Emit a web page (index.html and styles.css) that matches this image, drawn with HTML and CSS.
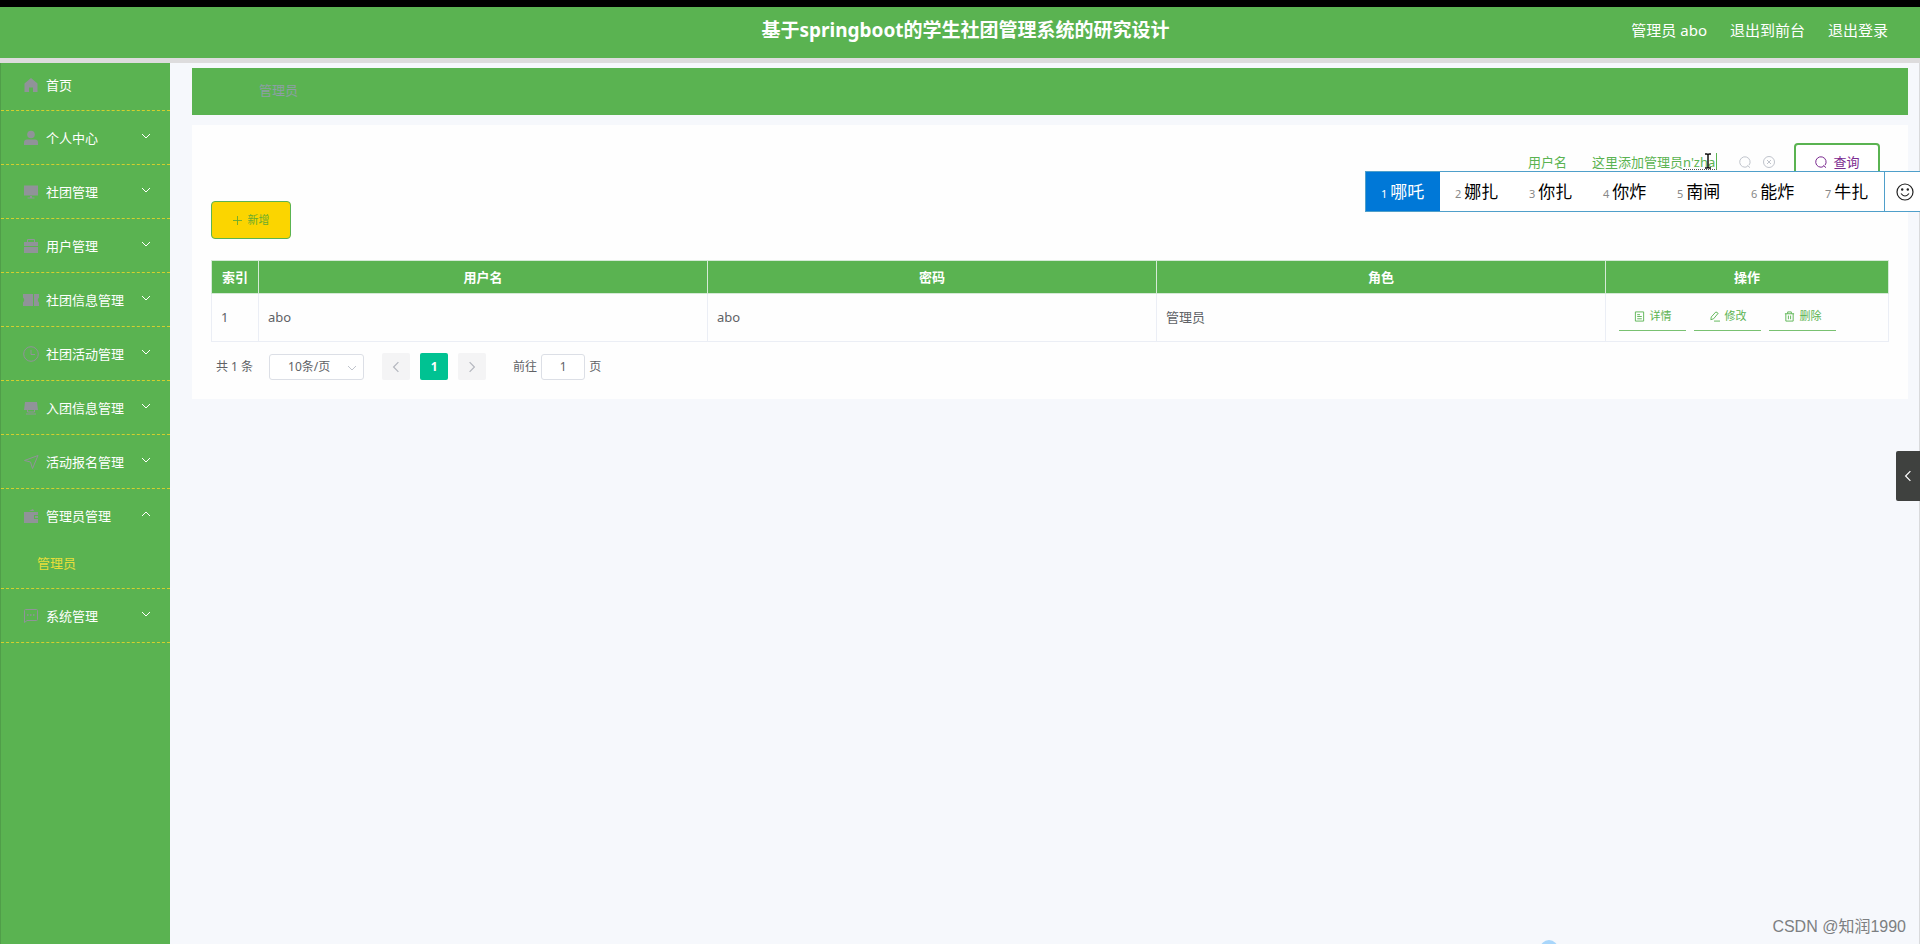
FILE: index.html
```html
<!DOCTYPE html>
<html lang="zh-CN">
<head>
<meta charset="utf-8">
<title>基于springboot的学生社团管理系统的研究设计</title>
<link rel="stylesheet" href="styles.css">
</head>
<body>
<svg class="defs" aria-hidden="true">
  <symbol id="chevron" viewBox="0 0 10 10"><path d="M1 3l4 4 4-4" fill="none" stroke="currentColor" stroke-width="1"/></symbol>
  <symbol id="search" viewBox="0 0 14 14"><path d="M9.500 11.500A5.200 5.200 0 1 1 11 10.200M9.300 10.300l2.700 2.400" fill="none" stroke="currentColor" stroke-width="1"/></symbol>
</svg>
<header class="topbar">
  <h1 class="title">基于springboot的学生社团管理系统的研究设计</h1>
  <nav class="user-nav">
    <span>管理员 abo</span>
    <a href="#">退出到前台</a>
    <a href="#">退出登录</a>
  </nav>
</header>
<div class="shell">
  <nav class="sidebar">
    <ul class="menu">
      <li class="group home"><button class="entry"><svg class="icon" viewBox="0 0 16 16"><path d="M8 1l6.500 5.500V15H10v-4.500H6V15H1.500V6.500z" fill="currentColor"/></svg><span>首页</span></button></li>
      <li class="group"><button class="entry"><svg class="icon" viewBox="0 0 16 16"><circle cx="8" cy="4.500" r="3.800" fill="currentColor"/><path d="M1 15v-2.500Q1 9.500 4 9.500h8q3 0 3 3V15z" fill="currentColor"/></svg><span>个人中心</span><svg class="arrow"><use href="#chevron"/></svg></button></li>
      <li class="group"><button class="entry"><svg class="icon" viewBox="0 0 16 16"><path d="M1 1.500h14v10H1zM7 12h2v1.500h2.500v1h-7v-1H7z" fill="currentColor"/></svg><span>社团管理</span><svg class="arrow"><use href="#chevron"/></svg></button></li>
      <li class="group"><button class="entry"><svg class="icon" viewBox="0 0 16 16"><path d="M1 4h14v4H1zM1 9h14v6H1z" fill="currentColor"/><path d="M4.500 4V1.500h7V4" fill="none" stroke="currentColor"/></svg><span>用户管理</span><svg class="arrow"><use href="#chevron"/></svg></button></li>
      <li class="group"><button class="entry"><svg class="icon" viewBox="0 0 16 16"><path d="M0 2h10v12H0v-3.500q2.500-2.500 0-5zM11 2h5v3.500q-2.500 2.500 0 5V14h-5z" fill="currentColor"/></svg><span>社团信息管理</span><svg class="arrow"><use href="#chevron"/></svg></button></li>
      <li class="group"><button class="entry"><svg class="icon" viewBox="0 0 16 16"><circle cx="8" cy="8" r="7.300" fill="none" stroke="currentColor"/><path d="M8 4v4.500h4" fill="none" stroke="currentColor"/></svg><span>社团活动管理</span><svg class="arrow"><use href="#chevron"/></svg></button></li>
      <li class="group"><button class="entry"><svg class="icon" viewBox="0 0 16 16"><path d="M2 2h12l1 8H1z" fill="currentColor"/><path d="M4.500 10v2h7v-2M3 14h10" fill="none" stroke="currentColor"/></svg><span>入团信息管理</span><svg class="arrow"><use href="#chevron"/></svg></button></li>
      <li class="group"><button class="entry"><svg class="icon" viewBox="0 0 16 16"><path d="M15 1.500L1.500 6.500l6 1.500 2 6.500z" fill="none" stroke="currentColor"/></svg><span>活动报名管理</span><svg class="arrow"><use href="#chevron"/></svg></button></li>
      <li class="group"><button class="entry"><svg class="icon" viewBox="0 0 16 16"><path d="M1 4h14v3h-4v4h4v4H1zM6 3l4-2 1 2zM12 8h3v2h-3z" fill="currentColor"/></svg><span>管理员管理</span><svg class="arrow up"><use href="#chevron"/></svg></button>
        <a class="sub" href="#">管理员</a></li>
      <li class="group"><button class="entry"><svg class="icon" viewBox="0 0 16 16"><path d="M1.500 2.500q0-1 1-1h11q1 0 1 1v9q0 1-1 1H4l-2.500 2z" fill="none" stroke="currentColor"/><path d="M4 7h1.500m1.500 0h1.500m1.500 0h1.500" stroke="currentColor" stroke-width="1.500"/></svg><span>系统管理</span><svg class="arrow"><use href="#chevron"/></svg></button></li>
    </ul>
  </nav>
  <main class="content">
    <div class="crumb">管理员</div>
    <section class="card">
      <form class="search">
        <label for="username">用户名</label>
        <div class="field">
          <input id="username" type="text" value="这里添加管理员n'zha">
          <span class="composing"></span>
          <svg class="ibeam" viewBox="0 0 8 16"><path d="M1 1h2l1 1 1-1h2M4 2v12M1 15h2l1-1 1 1h2" fill="none" stroke="#111" stroke-width="1.500"/></svg>
        </div>
        <svg class="field-icon"><use href="#search"/></svg>
        <svg class="field-icon" viewBox="0 0 14 14"><circle cx="7" cy="7" r="5.500" fill="none" stroke="currentColor"/><path d="M5 5l4 4M9 5l-4 4" stroke="currentColor"/></svg>
        <button class="query" type="button"><svg class="query-icon"><use href="#search"/></svg>查询</button>
      </form>
      <div class="ime">
        <span class="cand active"><small>1</small>哪吒</span>
        <span class="cand"><small>2</small>娜扎</span>
        <span class="cand"><small>3</small>你扎</span>
        <span class="cand"><small>4</small>你炸</span>
        <span class="cand"><small>5</small>南闸</span>
        <span class="cand"><small>6</small>能炸</span>
        <span class="cand"><small>7</small>牛扎</span>
        <span class="emoji"><svg class="smile" viewBox="0 0 18 18"><circle cx="9" cy="9" r="8" fill="none" stroke="#222" stroke-width="1.200"/><path d="M5 10.500q4 5 8 0" fill="none" stroke="#222" stroke-width="1.200"/><circle cx="6.200" cy="6.500" r="1.200" fill="#222"/><circle cx="11.800" cy="6.500" r="1.200" fill="#222"/></svg></span>
      </div>
      <button class="add" type="button"><svg class="plus" viewBox="0 0 10 10"><path d="M5 0v10M0 5h10" stroke="currentColor"/></svg>新增</button>
      <table class="grid">
        <colgroup><col class="col-index"><col><col><col><col class="col-ops"></colgroup>
        <thead><tr><th>索引</th><th>用户名</th><th>密码</th><th>角色</th><th>操作</th></tr></thead>
        <tbody><tr><td>1</td><td>abo</td><td>abo</td><td>管理员</td>
          <td><div class="ops">
            <button class="op" type="button"><svg class="op-icon" viewBox="0 0 12 12"><path d="M1.500 1h9v10h-9zM3.500 4h3M3.500 6h5M3.500 8.500h5" fill="none" stroke="currentColor"/></svg>详情</button>
            <button class="op" type="button"><svg class="op-icon" viewBox="0 0 12 12"><path d="M2 9.500l.5-3L7.500 1l2.500 1.500-5 6zM5.500 11H12" fill="none" stroke="currentColor"/></svg>修改</button>
            <button class="op" type="button"><svg class="op-icon" viewBox="0 0 12 12"><path d="M1 3h10M4 3V1h4v2M2 3v8h8V3M4.800 5v4M7.200 5v4" fill="none" stroke="currentColor"/></svg>删除</button>
          </div></td></tr></tbody>
      </table>
      <div class="pager">
        <span class="total">共 1 条</span>
        <span class="size"><select aria-label="每页条数"><option>10条/页</option></select><svg class="size-arrow"><use href="#chevron"/></svg></span>
        <button class="page" type="button" aria-label="上一页"><svg class="page-arrow prev"><use href="#chevron"/></svg></button>
        <button class="page current" type="button">1</button>
        <button class="page" type="button" aria-label="下一页"><svg class="page-arrow next"><use href="#chevron"/></svg></button>
        <label class="jump">前往<input type="text" value="1">页</label>
      </div>
    </section>
  </main>
</div>
<button class="drawer" aria-label="展开"><svg class="drawer-arrow"><use href="#chevron"/></svg></button>
<span class="bubble"></span>
<span class="watermark">CSDN @知润1990</span>
</body>
</html>
```

FILE: styles.css
```css
* { box-sizing: border-box; }
html { height: 100%; }
body {
  margin: 0;
  min-height: 100%;
  display: flex;
  flex-direction: column;
  position: relative;
  overflow: hidden;
  border-top: 7px solid #000;
  background: #f6f8fc;
  color: #606266;
  font: 13px/20px "Noto Sans", "Noto Sans CJK SC", sans-serif;
}
button, input, select { font: inherit; color: inherit; margin: 0; }
button { cursor: pointer; }
a { text-decoration: none; color: inherit; }
.defs { position: absolute; width: 0; height: 0; }

.topbar {
  display: grid;
  grid-template-columns: 1fr auto 1fr;
  align-items: center;
  height: 56px;
  padding: 0 32px 6px 43px;
  background: #5ab351;
  border-bottom: 5px solid #dddcdd;
  color: #fff;
}
.title { grid-column: 2; margin: 0; font-size: 19px; line-height: 28px; font-weight: 700; }
.user-nav { display: flex; justify-content: flex-end; gap: 23px; font-size: 15px; }

.shell { display: flex; flex: 1; border-right: 1px solid #d9dadc; }
.sidebar { width: 170px; flex: none; background: #5ab351; border-left: 1px solid #509e49; }
.menu { list-style: none; margin: 0; padding: 0; }
.group { border-bottom: 1px dashed #d3cf2d; }
.entry {
  display: flex;
  align-items: center;
  width: 100%;
  height: 53px;
  padding: 1px 19px 0 22px;
  border: 0;
  background: none;
  color: #fff;
  text-align: left;
}
.home .entry { height: 47px; padding-top: 0; padding-bottom: 4px; }
.icon { width: 16px; height: 16px; margin-right: 7px; color: #909399; }
.arrow { width: 10px; height: 10px; margin-left: auto; margin-bottom: 4px; }
.up { transform: rotate(180deg); }
.sub { display: block; padding: 11px 36px 15px; color: #e8de3a; }

.content { flex: 1; min-width: 0; padding: 5px 11px 0 22px; }
.crumb { height: 47px; padding: 12px 67px; background: #5ab351; color: #8d9fa5; }
.card { position: relative; margin-top: 10px; padding: 18px 19px 19px 19px; background: #fefefe; }

.search { display: flex; align-items: center; height: 40px; padding-right: 9px; color: #5ab351; }
.search label { margin-left: auto; margin-bottom: 3px; }
.field { position: relative; margin-left: 25px; margin-bottom: 3px; }
.field input { display: block; width: 138px; height: 28px; padding: 0; border: 0; outline: 0; background: none; }
.composing { position: absolute; left: 91px; top: 5px; width: 34px; height: 17px; border-bottom: 1px dotted #555; border-right: 1px solid #5ab351; }
.ibeam { position: absolute; left: 112px; top: 5px; width: 8px; height: 16px; }
.field-icon { width: 14px; height: 14px; margin-left: 10px; margin-bottom: 3px; color: #c0c4cc; }
.field + .field-icon { margin-left: 8px; }
.query {
  display: flex;
  align-items: center;
  justify-content: center;
  gap: 5px;
  width: 86px;
  height: 40px;
  margin-left: 18px;
  padding: 0 0 3px;
  border: 2px solid #5ab351;
  border-radius: 4px;
  background: #fff;
  color: #7b2a90;
}
.query-icon { width: 14px; height: 14px; }

.ime {
  position: absolute;
  z-index: 2;
  top: 46px;
  right: -12px;
  display: flex;
  height: 41px;
  background: #fff;
  border: 1px solid #4f9fca;
  border-right: 0;
}
.cand { display: flex; align-items: center; gap: 3px; width: 74px; padding-left: 15px; color: #000; font-size: 17px; }
.cand small { color: #888; font-size: 11px; padding-top: 4px; }
.cand.active, .active small { background: #0078d7; color: #fff; }
.emoji { display: flex; align-items: center; width: 36px; padding-left: 11px; border-left: 1px solid #4f9fca; }
.smile { width: 18px; height: 18px; }

.add {
  display: flex;
  align-items: center;
  justify-content: center;
  gap: 6px;
  width: 80px;
  height: 38px;
  margin: 18px 0 21px;
  border: 1px solid #5ab351;
  border-radius: 4px;
  background: #fbd500;
  color: #6aab2e;
  font-size: 11px;
}
.plus { width: 9px; height: 9px; }

.grid { width: 100%; table-layout: fixed; border-collapse: collapse; border: 1px solid #ebeef5; }
.col-index { width: 47px; }
.col-ops { width: 283px; }
.grid th { height: 33px; padding: 0; background: #5ab351; color: #fff; border: 1px solid #d5ead7; }
.grid td { height: 48px; padding: 0 9px 2px; border: 1px solid #ebeef5; }
.ops { display: flex; gap: 8px; padding-left: 4px; }
.op {
  display: flex;
  align-items: center;
  justify-content: center;
  gap: 5px;
  width: 67px;
  height: 28px;
  padding: 0;
  border: 0;
  border-bottom: 1px solid #79c171;
  background: none;
  color: #5ab351;
  font-size: 11px;
}
.op-icon { width: 11px; height: 11px; }

.pager { display: flex; align-items: center; height: 27px; margin-top: 11px; padding-left: 5px; font-size: 12px; }
.size { position: relative; margin: 0 18px 0 16px; }
.size select { appearance: none; display: block; width: 95px; height: 26px; padding: 0 18px; border: 1px solid #dcdfe6; border-radius: 3px; background: #fff; }
.size-arrow { position: absolute; right: 7px; top: 9px; width: 10px; height: 10px; color: #c0c4cc; }
.page { display: grid; place-items: center; width: 28px; height: 27px; margin-right: 10px; padding: 0; border: 0; border-radius: 2px; background: #f4f4f5; color: #b4b7be; }
.current { background: #00c292; color: #fff; font-weight: 700; }
.page-arrow { width: 12px; height: 12px; }
.prev { transform: rotate(90deg); }
.next { transform: rotate(-90deg); }
.jump { display: flex; align-items: center; gap: 4px; margin-left: 17px; }
.jump input { width: 44px; height: 26px; padding: 0; border: 1px solid #dcdfe6; border-radius: 3px; background: #fff; text-align: center; }

.drawer { position: absolute; right: 0; top: 444px; display: grid; place-items: center; width: 24px; height: 50px; padding: 0; border: 0; border-radius: 2px 0 0 2px; background: #3f413f; color: #fff; }
.drawer-arrow { width: 12px; height: 12px; transform: rotate(90deg); }
.bubble { position: absolute; left: 1540px; bottom: -14px; width: 18px; height: 18px; border-radius: 50%; background: #a8d6fb; }
.watermark { position: absolute; right: 14px; bottom: 7px; color: #7d7f82; font: 16px/20px "Liberation Sans", "Noto Sans CJK SC", sans-serif; }
```
